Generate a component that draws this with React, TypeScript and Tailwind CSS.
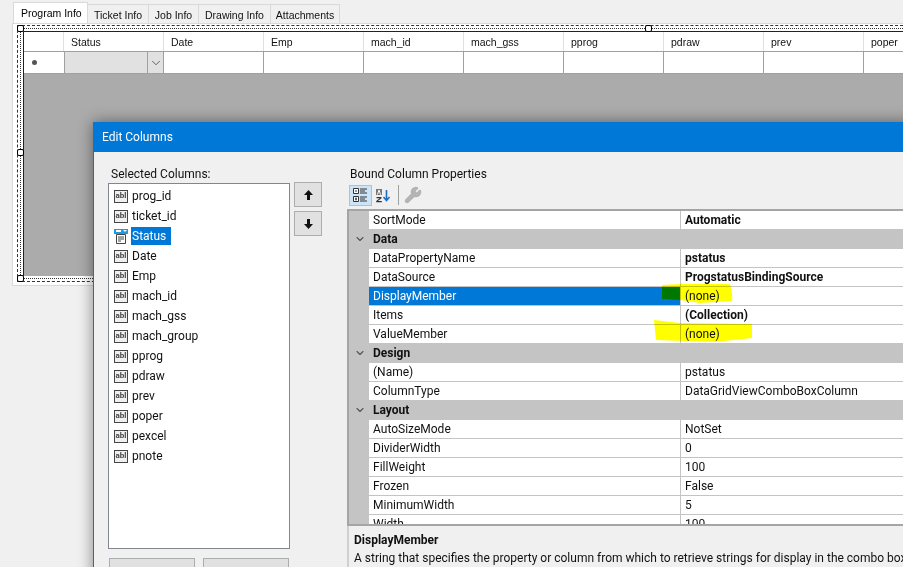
import React from 'react';
import { ChevronDown, Wrench } from 'lucide-react';

const tabs = [
  { label: 'Ticket Info', w: 'w-[61px]' },
  { label: 'Job Info', w: 'w-[50px]' },
  { label: 'Drawing Info', w: 'w-[72px]' },
  { label: 'Attachments', w: 'w-[69px]' },
];
const gridCols = ['Date', 'Emp', 'mach_id', 'mach_gss', 'pprog', 'pdraw', 'prev', 'poper'];
const columns = ['prog_id', 'ticket_id', 'Status', 'Date', 'Emp', 'mach_id', 'mach_gss', 'mach_group', 'pprog', 'pdraw', 'prev', 'poper', 'pexcel', 'pnote'];

type Row = { name: string; value?: string; bold?: boolean; selected?: boolean; group?: boolean };

const rows: Row[] = [
  { name: 'SortMode', value: 'Automatic', bold: true },
  { name: 'Data', group: true },
  { name: 'DataPropertyName', value: 'pstatus', bold: true },
  { name: 'DataSource', value: 'ProgstatusBindingSource', bold: true },
  { name: 'DisplayMember', value: '(none)', selected: true },
  { name: 'Items', value: '(Collection)', bold: true },
  { name: 'ValueMember', value: '(none)' },
  { name: 'Design', group: true },
  { name: '(Name)', value: 'pstatus' },
  { name: 'ColumnType', value: 'DataGridViewComboBoxColumn' },
  { name: 'Layout', group: true },
  { name: 'AutoSizeMode', value: 'NotSet' },
  { name: 'DividerWidth', value: '0' },
  { name: 'FillWeight', value: '100' },
  { name: 'Frozen', value: 'False' },
  { name: 'MinimumWidth', value: '5' },
  { name: 'Width', value: '100' },
];

function TextBoxIcon() {
  return (
    <span className="w-[14px] h-[13px] border border-[#444] bg-[#f0f0f0] flex items-center justify-center shrink-0 text-[8px] leading-none font-bold text-[#444]">
      abl
    </span>
  );
}

function ComboIcon() {
  return (
    <svg width="15" height="15" viewBox="0 0 15 15" className="shrink-0">
      <rect x="0" y="0" width="14" height="5" fill="#1e9be0" />
      <rect x="2" y="1" width="5" height="2" fill="#fff" />
      <path d="M9 1h4l-2 2z" fill="#fff" />
      <path d="M2.5 5.5h9v9h-9z" fill="#fff" stroke="#444" />
      <path d="M4 8h6M4 10h6M4 12h3" stroke="#444" />
    </svg>
  );
}

function Handle({ className }: { className: string }) {
  return <div className={`absolute w-[7px] h-[7px] rounded-[2px] bg-white border border-black ${className}`} />;
}

function Designer() {
  return (
    <div className="text-[10.5px] font-['Liberation_Sans',sans-serif]">
      <div className="flex items-end h-[23px] pl-[13px]">
        <div className="w-[75px] h-[21px] shrink-0 bg-white border border-b-0 border-[#d9d9d9] text-black pl-[7px] leading-[20px] whitespace-nowrap">Program Info</div>
        {tabs.map((t) => (
          <div key={t.label} className={`${t.w} h-[19px] shrink-0 text-center bg-[#f0f0f0] border border-b-0 border-l-0 border-[#d9d9d9] leading-[20px] whitespace-nowrap`}>{t.label}</div>
        ))}
      </div>
      <div className="ml-[12px] h-[263px] bg-white border-y border-l border-[#d9d9d9] pl-[4px] pt-[1px] pb-[3px]">
        <div className="relative h-full border-y border-l border-dashed border-[#333] p-[2px] pr-0">
          <div className="h-full border-y border-l border-dotted border-[#333] p-[2px] pr-0">
            <div className="h-full bg-[#ababab] border-t border-l border-[#222]">
              <div className="flex h-[20px] bg-white border-b border-[#a0a0a0]">
                <div className="w-[40px] shrink-0 border-r border-[#e0e0e0]" />
                <div className="w-[100px] shrink-0 border-r border-[#e0e0e0] pl-[7px] leading-[20px]">Status</div>
                {gridCols.map((c) => (
                  <div key={c} className="w-[100px] shrink-0 border-r border-[#e0e0e0] pl-[7px] leading-[20px]">{c}</div>
                ))}
              </div>
              <div className="flex h-[22px] bg-white border-b border-[#a0a0a0]">
                <div className="w-[40px] shrink-0 flex items-center pl-[8px]">
                  <span className="w-[5px] h-[5px] rounded-full bg-[#555]" />
                </div>
                <div className="w-[100px] shrink-0 border-x border-[#a0a0a0] bg-[#e1e1e1] flex justify-end">
                  <div className="w-[16px] border-l border-[#a0a0a0] flex items-center justify-center">
                    <ChevronDown size={14} strokeWidth={1.25} color="#333" />
                  </div>
                </div>
                {gridCols.map((c) => (
                  <div key={c} className="w-[100px] shrink-0 border-r border-[#a0a0a0]" />
                ))}
              </div>
            </div>
          </div>
          <Handle className="left-[-1px] top-[-1px]" />
          <Handle className="left-[-1px] top-[123px]" />
          <Handle className="left-[-1px] bottom-[-1px]" />
          <Handle className="left-[627px] top-[-1px]" />
        </div>
      </div>
    </div>
  );
}

function ColumnList() {
  return (
    <div className="w-[182px] shrink-0 mt-[14px] ml-[14px]">
      <div className="h-[16px] pl-[3px] leading-[16px]">Selected Columns:</div>
      <div className="mt-[1px] h-[366px] bg-white border border-[#82878f] pt-[2px] pl-[5px]">
        {columns.map((c) => (
          <div key={c} className="h-[20px] flex items-center">
            <div className="w-[17px] flex">{c === 'Status' ? <ComboIcon /> : <TextBoxIcon />}</div>
            <span className={c === 'Status' ? 'bg-[#0078d7] text-white pl-[1px] pr-[5px] h-[18px] leading-[18px]' : 'ml-[1px]'}>{c}</span>
          </div>
        ))}
      </div>
      <div className="flex gap-[8px] mt-[9px] pl-[1px]">
        <div className="w-[86px] h-[24px] bg-[#e1e1e1] border border-[#adadad]" />
        <div className="w-[86px] h-[24px] bg-[#e1e1e1] border border-[#adadad]" />
      </div>
    </div>
  );
}

function ArrowBtn({ down }: { down?: boolean }) {
  return (
    <div className="h-[25px] bg-[#e1e1e1] border border-[#adadad] flex items-center justify-center">
      <svg width="9" height="10" viewBox="0 0 9 10" className={down ? 'rotate-180' : ''}>
        <path d="M4.5 0 9 5H6v5H3V5H0z" fill="#111" />
      </svg>
    </div>
  );
}

function PropertyGrid() {
  return (
    <div className="relative w-[556px] shrink-0 ml-[25px] mt-[14px]">
      <div className="h-[16px] pl-[3px] leading-[16px]">Bound Column Properties</div>
      <div className="flex items-center h-[27px] pl-[2px] pb-[1px]">
        <div className="w-[23px] h-[21px] bg-[#cce4f7] border border-[#90c8f6] flex items-center justify-center">
          <svg width="15" height="14" viewBox="0 0 15 14">
            <path d="M.5.5h5v5h-5zM.5 8.5h5v5h-5z" fill="#fff" stroke="#333" />
            <path d="M2 3h2M2 11h2M3 9.5v3" stroke="#333" />
            <path d="M7 1h7M7 3h5M7 5h7M7 9h7M7 11h5M7 13h7" stroke="#333" />
          </svg>
        </div>
        <div className="w-[23px] h-[21px] flex items-center justify-center">
          <svg width="17" height="15" viewBox="0 0 17 15">
            <path d="M1 1h6v6H1z" fill="#777" />
            <path d="M2.5 6.5 4 2l1.5 4.5" stroke="#fff" fill="none" />
            <path d="M1.5 9h5v1.3L3 13h3.8v1.3H1.2V13l3.5-2.8H1.5z" fill="#333" />
            <path d="M11.5 2v10M8.5 9l3 3.5 3-3.5" stroke="#1b6ec2" strokeWidth="1.6" fill="none" />
          </svg>
        </div>
        <div className="w-px h-[20px] bg-[#a0a0a0] ml-[3px]" />
        <div className="ml-[5px]">
          <Wrench size={18} fill="#b4b4b4" color="#b4b4b4" strokeWidth={2} />
        </div>
      </div>
      <div className="h-[317px] border-y-2 border-l-2 border-[#a5a5a5] bg-[#c4c4c4] overflow-hidden">
        {rows.map((r) =>
          r.group ? (
            <div key={r.name} className="h-[19px] flex items-center font-bold bg-[#c4c4c4] pb-[1px]">
              <div className="w-[21px] flex justify-center">
                <ChevronDown size={12} strokeWidth={2.25} color="#555" />
              </div>
              <span className="pl-[3px]">{r.name}</span>
            </div>
          ) : (
            <div key={r.name} className="h-[19px] flex ml-[20px] border-b border-[#c4c4c4] bg-white leading-[18px]">
              <div className={`w-[312px] shrink-0 pl-[4px] border-r border-[#c4c4c4] ${r.selected ? 'bg-[#0078d7] text-white' : ''}`}>{r.name}</div>
              <div className={`pl-[4px] whitespace-nowrap ${r.bold ? 'font-bold' : ''}`}>{r.value}</div>
            </div>
          )
        )}
      </div>
      <div className="pl-[5px] pt-[5px] border-l-2 border-[#d0d0d0] h-[60px] leading-[18px] whitespace-nowrap">
        <div className="font-bold">DisplayMember</div>
        <div>A string that specifies the property or column from which to retrieve strings for display in the combo box.</div>
      </div>
    </div>
  );
}

export default function App() {
  return (
    <div className="relative w-[903px] h-[567px] overflow-hidden bg-[#f0f0f0] text-[12px] text-[#111] font-['Roboto','Noto_Sans',sans-serif]">
      <Designer />
      <div className="absolute left-[93px] top-[122px] w-[830px] h-[470px] bg-[#f0f0f0] border-l border-[#0078d7] shadow-[0_0_14px_rgba(0,0,0,0.45)]">
        <div className="h-[30px] bg-[#0078d7] text-white pl-[8px] leading-[30px]">Edit Columns</div>
        <div className="flex">
          <ColumnList />
          <div className="w-[28px] shrink-0 ml-[4px] mt-[30px] flex flex-col gap-[4px]">
            <ArrowBtn />
            <ArrowBtn down />
          </div>
          <PropertyGrid />
        </div>
      </div>
      {/* marker scribbles */}
      <svg width="903" height="567" className="absolute left-0 top-0 mix-blend-multiply pointer-events-none">
        <path d="M662 285 L680 284 L730 284 Q733 295 732 301 L700 303 L681 300 L662 299 Z" fill="#ffff00" />
        <path d="M654 320 L680 323 L752 324 L752 338 L715 342 L656 340 Z" fill="#ffff00" />
      </svg>
    </div>
  );
}
